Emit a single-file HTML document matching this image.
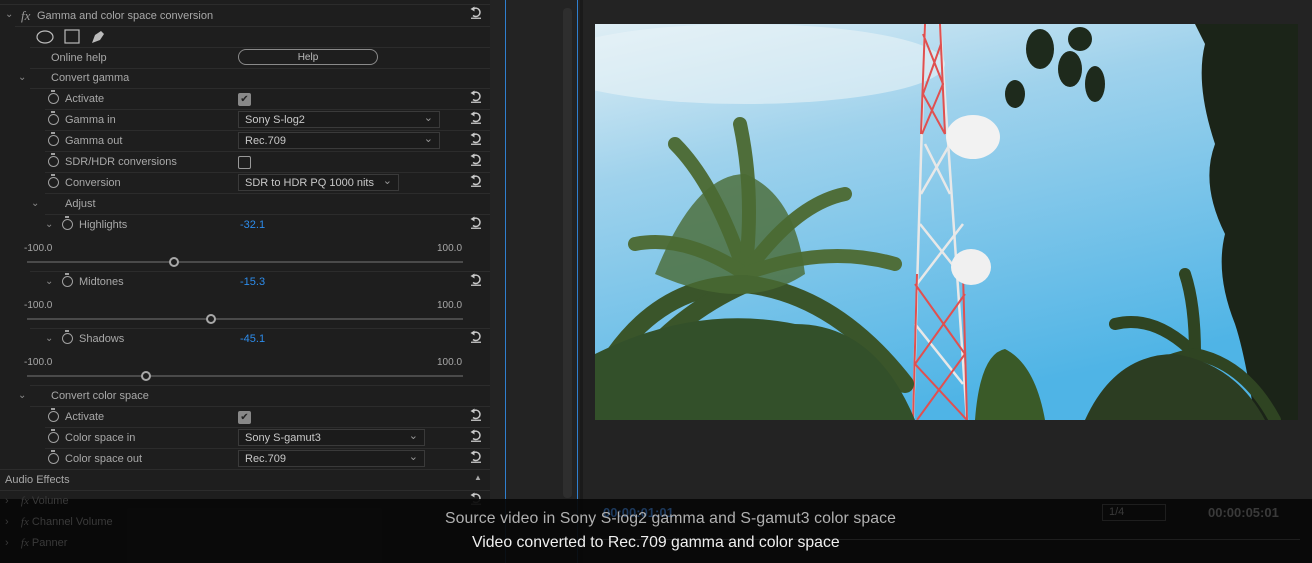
<!DOCTYPE html>
<html><head><style>
*{margin:0;padding:0;box-sizing:border-box}
body{width:1312px;height:563px;overflow:hidden;background:#232323;font-family:"Liberation Sans",sans-serif;font-size:11px;color:#a8a8a8;position:relative}
.a{position:absolute;white-space:nowrap}
.lp{position:absolute;left:0;top:0;width:490px;height:563px;background:#1e1e1e}
.sep{position:absolute;height:1px;background:#2c2c2c}
.rs{position:absolute;left:469px;width:14px;height:13px}
.sw{position:absolute;width:11px;height:11px;border:1.5px solid #a0a0a0;border-radius:50%}
.sw:before{content:"";position:absolute;left:2px;top:-4px;width:4px;height:2px;background:#a0a0a0}
.dd{position:absolute;height:17px;border:1px solid #3a3a3a;background:#1b1b1b;color:#c8c8c8;padding:2px 6px;font-size:11px}
.dd:after{content:"⌄";position:absolute;right:6px;top:-1px;color:#999}
.chev{position:absolute;color:#8a8a8a;font-size:10px}
.blue{color:#2d8ceb}
.trk{position:absolute;left:27px;width:436px;height:2px;background:#4a4a4a}
.knob{position:absolute;width:10px;height:10px;border:2px solid #a8a8a8;border-radius:50%;background:#1e1e1e}
.cb{position:absolute;width:13px;height:13px;border-radius:2px}
</style></head><body>
<div class="lp"></div>
<div class="sep" style="left:0;top:4px;width:490px"></div>
<div class="sep" style="left:15px;top:26px;width:475px"></div>
<div class="sep" style="left:30px;top:47px;width:460px"></div>
<div class="sep" style="left:30px;top:68px;width:460px"></div>
<div class="sep" style="left:30px;top:88px;width:460px"></div>
<div class="sep" style="left:45px;top:109px;width:445px"></div>
<div class="sep" style="left:45px;top:130px;width:445px"></div>
<div class="sep" style="left:45px;top:151px;width:445px"></div>
<div class="sep" style="left:45px;top:172px;width:445px"></div>
<div class="sep" style="left:45px;top:193px;width:445px"></div>
<div class="sep" style="left:45px;top:214px;width:445px"></div>
<div class="sep" style="left:30px;top:271px;width:460px"></div>
<div class="sep" style="left:30px;top:328px;width:460px"></div>
<div class="sep" style="left:30px;top:385px;width:460px"></div>
<div class="sep" style="left:30px;top:406px;width:460px"></div>
<div class="sep" style="left:45px;top:427px;width:445px"></div>
<div class="sep" style="left:45px;top:448px;width:445px"></div>
<div class="sep" style="left:0;top:469px;width:490px"></div>
<div class="sep" style="left:0;top:490px;width:490px"></div>

<div class="chev" style="left:5px;top:9px">⌄</div>
<div class="a" style="left:21px;top:8px;font-style:italic;font-family:'Liberation Serif',serif;font-size:13px;color:#999">fx</div>
<div class="a" style="left:37px;top:10px">Gamma and color space conversion</div>
<svg class="a" style="left:36px;top:29px" width="80" height="16"><ellipse cx="9" cy="8" rx="8" ry="6" fill="none" stroke="#bbb" stroke-width="1.2"/><rect x="29" y="1" width="14" height="13" fill="none" stroke="#bbb" stroke-width="1.2"/><path d="M56 14 L59 6 L65 2 L68 5 L64 11 Z" fill="#bbb"/></svg>
<div class="a" style="left:51px;top:52px">Online help</div>
<div class="a" style="left:238px;top:49px;width:140px;height:16px;border:1px solid #8a8a8a;border-radius:8px;text-align:center;font-size:10px;line-height:16px;color:#bbb">Help</div>
<div class="chev" style="left:18px;top:72px">⌄</div>
<div class="a" style="left:51px;top:72px">Convert gamma</div>

<div class="sw" style="left:48px;top:93px"></div><div class="a" style="left:65px;top:93px">Activate</div>
<div class="cb" style="left:238px;top:93px;background:#888;color:#222;font-size:10px;text-align:center;line-height:13px">✔</div>
<div class="sw" style="left:48px;top:114px"></div><div class="a" style="left:65px;top:114px">Gamma in</div>
<div class="dd" style="left:238px;top:111px;width:202px">Sony S-log2</div>
<div class="sw" style="left:48px;top:135px"></div><div class="a" style="left:65px;top:135px">Gamma out</div>
<div class="dd" style="left:238px;top:132px;width:202px">Rec.709</div>
<div class="sw" style="left:48px;top:156px"></div><div class="a" style="left:65px;top:156px">SDR/HDR conversions</div>
<div class="cb" style="left:238px;top:156px;border:1.5px solid #999"></div>
<div class="sw" style="left:48px;top:177px"></div><div class="a" style="left:65px;top:177px">Conversion</div>
<div class="dd" style="left:238px;top:174px;width:161px">SDR to HDR PQ 1000 nits</div>
<div class="chev" style="left:31px;top:198px">⌄</div>
<div class="a" style="left:65px;top:198px">Adjust</div>

<div class="chev" style="left:45px;top:219px">⌄</div><div class="sw" style="left:62px;top:219px"></div>
<div class="a" style="left:79px;top:219px">Highlights</div><div class="a blue" style="left:240px;top:219px">-32.1</div>
<div class="a" style="left:24px;top:243px;font-size:10px">-100.0</div><div class="a" style="left:437px;top:243px;font-size:10px">100.0</div>
<div class="trk" style="top:261px"></div><div class="knob" style="left:169px;top:257px"></div>

<div class="chev" style="left:45px;top:276px">⌄</div><div class="sw" style="left:62px;top:276px"></div>
<div class="a" style="left:79px;top:276px">Midtones</div><div class="a blue" style="left:240px;top:276px">-15.3</div>
<div class="a" style="left:24px;top:300px;font-size:10px">-100.0</div><div class="a" style="left:437px;top:300px;font-size:10px">100.0</div>
<div class="trk" style="top:318px"></div><div class="knob" style="left:206px;top:314px"></div>

<div class="chev" style="left:45px;top:333px">⌄</div><div class="sw" style="left:62px;top:333px"></div>
<div class="a" style="left:79px;top:333px">Shadows</div><div class="a blue" style="left:240px;top:333px">-45.1</div>
<div class="a" style="left:24px;top:357px;font-size:10px">-100.0</div><div class="a" style="left:437px;top:357px;font-size:10px">100.0</div>
<div class="trk" style="top:375px"></div><div class="knob" style="left:141px;top:371px"></div>

<div class="chev" style="left:18px;top:390px">⌄</div>
<div class="a" style="left:51px;top:390px">Convert color space</div>
<div class="sw" style="left:48px;top:411px"></div><div class="a" style="left:65px;top:411px">Activate</div>
<div class="cb" style="left:238px;top:411px;background:#888;color:#222;font-size:10px;text-align:center;line-height:13px">✔</div>
<div class="sw" style="left:48px;top:432px"></div><div class="a" style="left:65px;top:432px">Color space in</div>
<div class="dd" style="left:238px;top:429px;width:187px">Sony S-gamut3</div>
<div class="sw" style="left:48px;top:453px"></div><div class="a" style="left:65px;top:453px">Color space out</div>
<div class="dd" style="left:238px;top:450px;width:187px">Rec.709</div>
<div class="a" style="left:5px;top:474px">Audio Effects</div>
<div class="a" style="left:474px;top:473px;font-size:8px">▲</div>

<svg width="0" height="0" style="position:absolute"><defs><symbol id="r" viewBox="0 0 14 13"><path d="M4.5 2.8 A4.2 4.2 0 1 1 4 9.5" fill="none" stroke="#c8c8c8" stroke-width="1.5"/><path d="M1.5 3 L5.5 0.5 L5.5 5.5 Z" fill="#c8c8c8"/><rect x="2" y="11.6" width="10" height="1.3" fill="#c8c8c8"/></symbol></defs></svg>
<svg class="rs" style="top:6px"><use href="#r"/></svg>
<svg class="rs" style="top:90px"><use href="#r"/></svg>
<svg class="rs" style="top:111px"><use href="#r"/></svg>
<svg class="rs" style="top:132px"><use href="#r"/></svg>
<svg class="rs" style="top:153px"><use href="#r"/></svg>
<svg class="rs" style="top:174px"><use href="#r"/></svg>
<svg class="rs" style="top:216px"><use href="#r"/></svg>
<svg class="rs" style="top:273px"><use href="#r"/></svg>
<svg class="rs" style="top:330px"><use href="#r"/></svg>
<svg class="rs" style="top:408px"><use href="#r"/></svg>
<svg class="rs" style="top:429px"><use href="#r"/></svg>
<svg class="rs" style="top:450px"><use href="#r"/></svg>
<svg class="rs" style="top:492px"><use href="#r"/></svg>

<div class="a" style="left:490px;top:0;width:90px;height:563px;background:#232323"></div>
<div class="a" style="left:505px;top:0;width:1px;height:563px;background:#2f7fcf"></div>
<div class="a" style="left:577px;top:0;width:1px;height:563px;background:#2f7fcf"></div>
<div class="a" style="left:563px;top:8px;width:9px;height:490px;background:#2e2e2e;border-radius:4px"></div>
<div class="a" style="left:580px;top:0;width:3px;height:563px;background:#1a1a1a"></div>

<svg class="a" style="left:595px;top:24px" width="703" height="396" viewBox="0 0 703 396">
<defs><linearGradient id="sky" x1="0" y1="0" x2="0.4" y2="1"><stop offset="0" stop-color="#dfeef5"/><stop offset="0.35" stop-color="#9fd2ec"/><stop offset="1" stop-color="#4fb4e6"/></linearGradient></defs>
<rect width="703" height="396" fill="url(#sky)"/>
<ellipse cx="150" cy="40" rx="200" ry="40" fill="#eaf3f6" opacity="0.6"/>
<g stroke="#e8e8e8" stroke-width="2.5" fill="none">
<path d="M318 396 L330 0 M372 396 L345 0"/>
<path d="M325 200 L365 250 M322 260 L368 200 M320 300 L368 360 M330 120 L355 170 M355 120 L326 170"/>
</g>
<g stroke="#e05050" stroke-width="2" fill="none">
<path d="M318 396 L322 250 M372 396 L368 250 M326 110 L330 0 M350 110 L345 0"/>
<path d="M320 260 L370 330 L322 396 M370 270 L320 340 L372 396 M328 10 L348 60 L327 110 M346 20 L328 70 L350 110"/>
</g>
<ellipse cx="378" cy="113" rx="27" ry="22" fill="#f2f2f2"/>
<ellipse cx="376" cy="243" rx="20" ry="18" fill="#f0f0f0"/>
<g fill="none" stroke-linecap="round">
<g stroke="#4f6e3a" stroke-width="14">
<path d="M150 250 Q120 160 80 120"/><path d="M150 250 Q160 170 145 100"/><path d="M150 250 Q200 180 250 170"/>
<path d="M150 250 Q90 210 40 220"/><path d="M150 250 Q230 220 300 240"/>
</g>
<g stroke="#3a552a" stroke-width="18">
<path d="M150 260 Q70 260 20 330"/><path d="M150 260 Q240 270 310 360"/><path d="M150 260 Q60 300 10 390"/>
</g>
</g>
<path d="M0 330 Q100 280 200 300 Q280 300 320 396 L0 396 Z" fill="#33502a"/>
<path d="M60 250 Q100 150 150 150 Q200 170 210 250 Q150 290 60 250 Z" fill="#4a6a33" opacity="0.8"/>
<path d="M380 396 Q385 330 410 325 Q440 340 450 396 Z" fill="#3a5a28"/>
<path d="M600 0 L703 0 L703 396 L660 396 Q650 330 640 300 Q620 250 630 210 Q605 160 620 120 Q600 60 610 20 Z" fill="#1b2418"/>
<g fill="#1e2a1c"><ellipse cx="320" cy="20" rx="0" ry="0"/><ellipse cx="445" cy="25" rx="14" ry="20"/><ellipse cx="475" cy="45" rx="12" ry="18"/><ellipse cx="500" cy="60" rx="10" ry="18"/><ellipse cx="420" cy="70" rx="10" ry="14"/><ellipse cx="485" cy="15" rx="12" ry="12"/></g>
<g fill="none" stroke="#2f4422" stroke-width="12" stroke-linecap="round">
<path d="M600 330 Q560 290 520 300"/><path d="M600 330 Q600 280 590 250"/><path d="M600 330 Q540 340 500 396"/><path d="M600 330 Q650 340 680 396"/>
</g>
<path d="M490 396 Q520 330 580 330 Q640 340 670 396 Z" fill="#2c3d22"/>
</svg>

<div class="a" style="left:0;top:499px;width:1312px;height:64px;background:rgba(8,8,8,0.93)"></div>
<div class="a" style="left:5px;top:495px;color:#3a3a3a;font-size:11px">›&nbsp;&nbsp;&nbsp;&nbsp;<i style="font-family:'Liberation Serif'">fx</i> Volume</div>
<div class="a" style="left:5px;top:516px;color:#3a3a3a;font-size:11px">›&nbsp;&nbsp;&nbsp;&nbsp;<i style="font-family:'Liberation Serif'">fx</i> Channel Volume</div>
<div class="a" style="left:5px;top:537px;color:#3a3a3a;font-size:11px">›&nbsp;&nbsp;&nbsp;&nbsp;<i style="font-family:'Liberation Serif'">fx</i> Panner</div>
<div class="a" style="left:603px;top:505px;color:#1d3a5e;font-size:13px;font-weight:bold">00:00:01:01</div>
<div class="a" style="left:1102px;top:504px;width:64px;height:17px;border:1px solid #1e1e1e;color:#3a3a3a;font-size:11px;padding:1px 6px">1/4</div>
<div class="a" style="left:1208px;top:505px;color:#3a3a3a;font-size:13px;font-weight:bold">00:00:05:01</div>
<div class="a" style="left:600px;top:539px;width:700px;height:1px;background:#1e1e1e"></div>
<div class="a" style="left:445px;top:510px;width:452px;color:#b0b0b0;font-size:15.8px;letter-spacing:0.1px">Source video in Sony S-log2 gamma and S-gamut3 color space</div>
<div class="a" style="left:472px;top:534px;width:380px;color:#f0f0f0;font-size:15.8px">Video converted to Rec.709 gamma and color space</div>
</body></html>
